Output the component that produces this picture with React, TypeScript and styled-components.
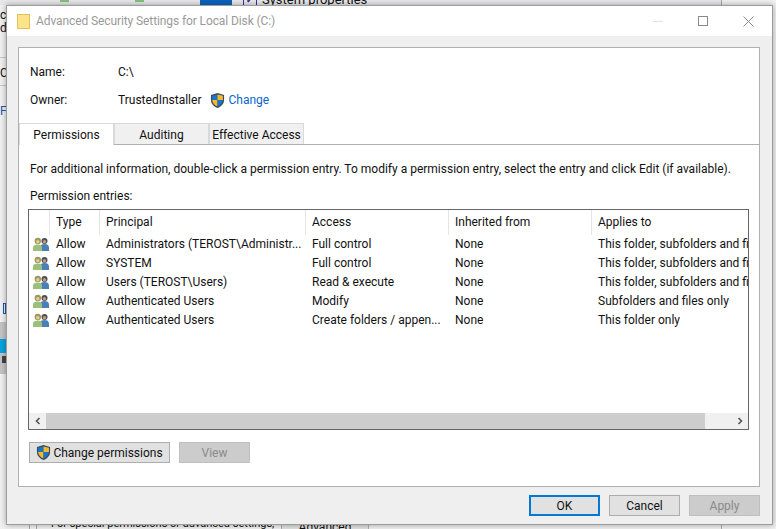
import styled, { createGlobalStyle } from "styled-components";

const entries = [
  ["Allow", "Administrators (TEROST\\Administrators)", "Full control", "None", "This folder, subfolders and files"],
  ["Allow", "SYSTEM", "Full control", "None", "This folder, subfolders and files"],
  ["Allow", "Users (TEROST\\Users)", "Read & execute", "None", "This folder, subfolders and files"],
  ["Allow", "Authenticated Users", "Modify", "None", "Subfolders and files only"],
  ["Allow", "Authenticated Users", "Create folders / append data", "None", "This folder only"],
];

const columns = ["Type", "Principal", "Access", "Inherited from", "Applies to"];

function Shield() {
  return (
    <svg width="15" height="17" viewBox="0 0 16 17">
      <path d="M8 .5 15 2.500V8c0 4-3 7-7 8.500C4 15 1 12 1 8V2.500z" fill="#3b4a5c" />
      <path d="M8 2 2.200 3.500V8H8z" fill="#1a76c8" />
      <path d="M8 2l5.800 1.500V8H8z" fill="#f5b92e" />
      <path d="M2.200 8H8v7C4.800 13.700 2.500 11.200 2.200 8z" fill="#f5b92e" />
      <path d="M13.800 8H8v7c3.200-1.300 5.500-3.800 5.800-7z" fill="#1a76c8" />
    </svg>
  );
}

function Users() {
  return (
    <svg width="16" height="15" viewBox="0 0 16 15">
      <circle cx="11.500" cy="4" r="3" fill="#4a5058" />
      <path d="M7 14v-3.500C7 8 9 7 11.500 7S16 8 16 10.500V14z" fill="#4a80b8" />
      <circle cx="11.500" cy="4.800" r="1.700" fill="#c89878" />
      <circle cx="4.800" cy="4" r="3.200" fill="#a09a58" />
      <path d="M0 14v-3.500C0 8.300 2.300 7.500 4.800 7.500s4.200.8 4.200 3V14z" fill="#9cc07c" />
      <circle cx="4.800" cy="4.800" r="1.700" fill="#e8c8a0" />
    </svg>
  );
}

function App() {
  return (
    <Desktop>
      <GlobalStyle />
      <BackWindow>
        <BackTop />
        <Cable $left={60} />
        <Cable $left={135} />
        <SystemProps>
          <BackTile />
          <BackCheck>✓</BackCheck>
          <span>System properties</span>
        </SystemProps>
        <BackLetter $top={8}>c</BackLetter>
        <BackLetter $top={21}>d</BackLetter>
        <BackLine $top={57} />
        <BackLetter $top={66}>C</BackLetter>
        <BackLine $top={85} />
        <BackLetter $top={104} $blue>
          F
        </BackLetter>
        <BlueEdge />
        <BackEdge $left={721} />
        <BackEdge $left={29} />
        <BackEdge $left={36} />
        <BackFooter>For special permissions or advanced settings,</BackFooter>
        <BackAdvanced>Advanced</BackAdvanced>
      </BackWindow>
      <LeftStrip>
        <Cyan />
        <DarkDot />
      </LeftStrip>
      <Dialog>
        <TitleBar>
          <FolderIcon />
          <TitleText>Advanced Security Settings for Local Disk (C:)</TitleText>
          <WindowButtons>
            <MinButton />
            <MaxButton />
            <svg width="11" height="11" viewBox="0 0 11 11">
              <path d="M.5.5l10 10M10.500.5l-10 10" stroke="#8a8a8a" strokeWidth="1" />
            </svg>
          </WindowButtons>
        </TitleBar>
        <Panel>
          <InfoGrid>
            <span>Name:</span>
            <span>C:\</span>
            <span>Owner:</span>
            <OwnerCell>
              TrustedInstaller
              <ChangeLink>
                <Shield />
                <a>Change</a>
              </ChangeLink>
            </OwnerCell>
          </InfoGrid>
          <TabRow>
            <Tab $active>Permissions</Tab>
            <Tab>Auditing</Tab>
            <Tab>Effective Access</Tab>
          </TabRow>
          <TabBody>
            <Hint>
              For additional information, double-click a permission entry. To modify a permission entry, select the
              entry and click Edit (if available).
            </Hint>
            <EntriesLabel>Permission entries:</EntriesLabel>
            <ListView>
              <HeaderRow>
                <HeaderCell />
                {columns.map((c) => (
                  <HeaderCell key={c}>{c}</HeaderCell>
                ))}
              </HeaderRow>
              <Rows>
                {entries.map((e, i) => (
                  <Row key={i}>
                    <IconCell>
                      <Users />
                    </IconCell>
                    {e.map((v, j) => (
                      <Cell key={j}>
                        {j === 1 && v.length > 32
                          ? "Administrators (TEROST\\Administr..."
                          : j === 2 && v.length > 20
                            ? "Create folders / appen..."
                            : v}
                      </Cell>
                    ))}
                  </Row>
                ))}
              </Rows>
              <ScrollBar>
                <Arrow>
                  <svg width="8" height="8" viewBox="0 0 8 8">
                    <path d="M5.500 1 2.500 4l3 3" fill="none" stroke="#555" strokeWidth="1.600" />
                  </svg>
                </Arrow>
                <Thumb />
                <Arrow>
                  <svg width="8" height="8" viewBox="0 0 8 8">
                    <path d="M2.500 1l3 3-3 3" fill="none" stroke="#555" strokeWidth="1.600" />
                  </svg>
                </Arrow>
              </ScrollBar>
            </ListView>
            <ActionRow>
              <Button $width={141}>
                <Shield />
                Change permissions
              </Button>
              <Button $width={71} $disabled>
                View
              </Button>
            </ActionRow>
          </TabBody>
        </Panel>
        <Footer>
          <Button $width={71} $primary>
            OK
          </Button>
          <Button $width={71}>Cancel</Button>
          <Button $width={71} $disabled>
            Apply
          </Button>
        </Footer>
      </Dialog>
    </Desktop>
  );
}

export default App;

const GlobalStyle = createGlobalStyle`
  html, body {
    margin: 0;
    height: 100%;
    overflow: hidden;
  }
  body {
    font-family: Roboto, "Noto Sans", sans-serif;
    font-size: 12px;
    color: #111;
  }
`;

const Desktop = styled.div`
  position: relative;
  width: 776px;
  height: 529px;
  background: #f1f1f1;
  overflow: hidden;
`;

const BackWindow = styled.div`
  position: absolute;
  inset: 0;
`;

const BackTop = styled.div`
  height: 5px;
  width: 721px;
  background: #e8e8ea;
  border-right: 1px solid #a8a8a8;
`;

const Cable = styled.i<{ $left: number }>`
  position: absolute;
  top: 0;
  left: ${(p) => p.$left}px;
  width: 9px;
  height: 2px;
  background: #7fc27a;
`;

const SystemProps = styled.div`
  position: absolute;
  top: -8px;
  left: 243px;
  display: flex;
  align-items: center;
  gap: 3px;
  font-size: 13px;
  line-height: 16px;
  span {
    margin-left: 2px;
  }
`;

const BackTile = styled.i`
  position: absolute;
  left: -43px;
  top: 0;
  width: 32px;
  height: 13px;
  background: #0a62c0;
`;

const BackCheck = styled.b`
  width: 12px;
  height: 12px;
  border: 1px solid #33339a;
  color: #22229a;
  font-size: 9px;
  line-height: 12px;
  text-align: center;
`;

const BackLetter = styled.span<{ $top: number; $blue?: boolean }>`
  position: absolute;
  left: 0;
  top: ${(p) => p.$top}px;
  color: ${(p) => (p.$blue ? "#2255aa" : "#111")};
`;

const BackLine = styled.i<{ $top: number }>`
  position: absolute;
  left: 0;
  top: ${(p) => p.$top}px;
  width: 6px;
  height: 1px;
  background: #c8c8c8;
`;

const BlueEdge = styled.i`
  position: absolute;
  left: 3px;
  top: 303px;
  width: 3px;
  height: 11px;
  border: 1px solid #2255aa;
  box-sizing: border-box;
`;

const BackEdge = styled.i<{ $left: number }>`
  position: absolute;
  left: ${(p) => p.$left}px;
  top: 525px;
  width: 1px;
  height: 4px;
  background: #a8a8a8;
`;

const BackFooter = styled.span`
  position: absolute;
  left: 51px;
  top: 517px;
  font-size: 11px;
  white-space: nowrap;
`;

const BackAdvanced = styled.span`
  position: absolute;
  left: 281px;
  top: 519px;
  width: 86px;
  height: 12px;
  background: #e1e1e1;
  border: 1px solid #adadad;
  text-align: center;
  line-height: 14px;
`;

const LeftStrip = styled.div`
  position: absolute;
  left: 0;
  top: 322px;
  width: 6px;
  height: 52px;
  background: #c4c4c4;
`;

const Cyan = styled.i`
  display: block;
  margin-top: 17px;
  height: 14px;
  background: #08a4dc;
`;

const DarkDot = styled.i`
  display: block;
  margin: 3px 0 0 2px;
  height: 7px;
  background: #444;
`;

const Dialog = styled.section`
  position: absolute;
  left: 6px;
  top: 5px;
  width: 767px;
  height: 520px;
  box-sizing: border-box;
  border: 1px solid #9c9c9c;
  background: #efefef;
  box-shadow: 0 0 6px rgba(0, 0, 0, 0.35);
  display: flex;
  flex-direction: column;
`;

const TitleBar = styled.header`
  height: 30px;
  background: #fff;
  display: flex;
  align-items: center;
  padding-left: 10px;
  flex: none;
`;

const FolderIcon = styled.i`
  box-sizing: border-box;
  width: 13px;
  height: 15px;
  background: #fde38a;
  border: 1px solid #e3c05c;
  margin-right: 6px;
`;

const TitleText = styled.span`
  color: #9a9a9a;
  flex: 1;
  letter-spacing: -0.1px;
`;

const WindowButtons = styled.div`
  display: flex;
  align-items: center;
  gap: 35px;
  margin-right: 18px;
`;

const MinButton = styled.i`
  width: 10px;
  height: 1px;
  background: #e2e2e2;
`;

const MaxButton = styled.i`
  width: 8px;
  height: 8px;
  border: 1px solid #8a8a8a;
`;

const Panel = styled.main`
  margin: 11px 12px 0 11px;
  height: 440px;
  box-sizing: border-box;
  border: 1px solid #b0b0b0;
  background: #fff;
  flex: none;
  display: flex;
  flex-direction: column;
`;

const InfoGrid = styled.div`
  display: grid;
  grid-template-columns: 88px 1fr;
  grid-auto-rows: 28px;
  align-items: center;
  padding: 10px 0 0 11px;
  height: 65px;
  flex: none;
`;

const OwnerCell = styled.div`
  display: flex;
  align-items: center;
`;

const ChangeLink = styled.span`
  display: flex;
  align-items: center;
  gap: 3px;
  margin-left: 9px;
  a {
    color: #0a66cc;
  }
`;

const TabRow = styled.div`
  display: flex;
  height: 21px;
  flex: none;
  border-bottom: 1px solid #b0b0b0;
`;

const Tab = styled.div<{ $active?: boolean }>`
  box-sizing: border-box;
  width: 95px;
  height: ${(p) => (p.$active ? 22 : 21)}px;
  line-height: 22px;
  text-align: center;
  background: ${(p) => (p.$active ? "#fff" : "#f0f0f0")};
  border: 1px solid #d9d9d9;
  border-bottom: none;
  ${(p) => p.$active && "z-index: 1;"}
`;

const TabBody = styled.div`
  padding: 15px 10px 0 9px;
  flex: 1;
  display: flex;
  flex-direction: column;
`;

const Hint = styled.div`
  height: 20px;
  line-height: 18px;
  white-space: nowrap;
  padding-left: 2px;
`;

const EntriesLabel = styled.div`
  height: 20px;
  line-height: 20px;
  margin-top: 6px;
  padding-left: 2px;
`;

const ListView = styled.div`
  box-sizing: border-box;
  height: 221px;
  margin-top: 3px;
  border: 1px solid #666;
  background: #fff;
  display: flex;
  flex-direction: column;
  overflow: hidden;
`;

const HeaderRow = styled.div`
  display: grid;
  grid-template-columns: 21px 50px 206px 143px 143px 1fr;
  height: 25px;
  flex: none;
`;

const HeaderCell = styled.div`
  box-sizing: border-box;
  padding-left: 6px;
  line-height: 24px;
  border-right: 1px solid #e5e5e5;
  white-space: nowrap;
  &:last-child {
    border-right: none;
  }
`;

const Rows = styled.div`
  flex: 1;
`;

const Row = styled.div`
  display: grid;
  grid-template-columns: 21px 50px 206px 143px 143px 1fr;
  height: 19px;
`;

const IconCell = styled.div`
  display: flex;
  align-items: center;
  padding-left: 4px;
`;

const Cell = styled.div`
  padding-left: 6px;
  line-height: 19px;
  white-space: nowrap;
  overflow: hidden;
`;

const ScrollBar = styled.div`
  height: 16px;
  display: flex;
  background: #f0f0f0;
  flex: none;
`;

const Arrow = styled.div`
  width: 17px;
  display: flex;
  align-items: center;
  justify-content: center;
`;

const Thumb = styled.div`
  flex: 1;
  margin-right: 26px;
  background: #cdcdcd;
`;

const ActionRow = styled.div`
  display: flex;
  gap: 9px;
  margin-top: 12px;
  padding-left: 1px;
`;

const Button = styled.div<{ $width: number; $primary?: boolean; $disabled?: boolean }>`
  box-sizing: border-box;
  width: ${(p) => p.$width}px;
  height: 21px;
  display: flex;
  align-items: center;
  justify-content: center;
  gap: 2px;
  white-space: nowrap;
  background: ${(p) => (p.$disabled ? "#cccccc" : "#e1e1e1")};
  color: ${(p) => (p.$disabled ? "#8a8a8a" : "#111")};
  border: ${(p) => (p.$primary ? "2px solid #0078d7" : p.$disabled ? "1px solid #bfbfbf" : "1px solid #adadad")};
`;

const Footer = styled.footer`
  display: flex;
  justify-content: flex-end;
  gap: 9px;
  margin: 8px 12px 0 0;
`;
